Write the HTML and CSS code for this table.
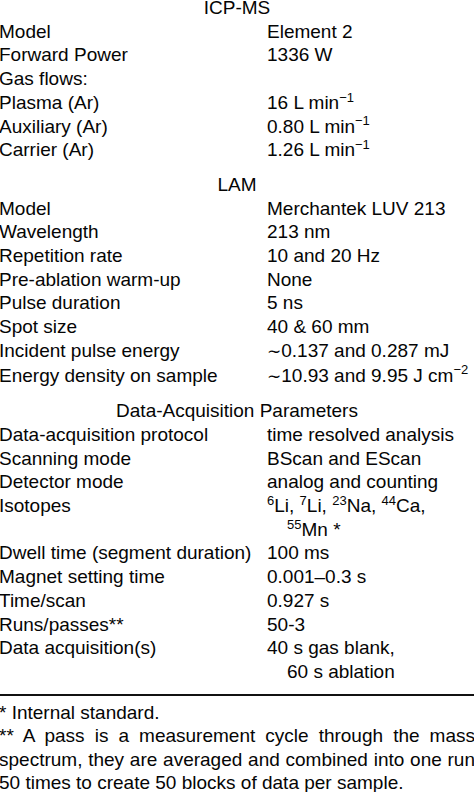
FILE: index.html
```html
<!DOCTYPE html>
<html>
<head>
<meta charset="utf-8">
<link rel="stylesheet" href="styles.css">
</head>
<body>
<div class="sheet">
  <section class="section">
    <div class="heading">ICP-MS</div>
    <div class="row"><div class="label">Model</div><div class="value">Element 2</div></div>
    <div class="row"><div class="label">Forward Power</div><div class="value">1336 W</div></div>
    <div class="row"><div class="label">Gas flows:</div><div class="value"></div></div>
    <div class="row"><div class="label">Plasma (Ar)</div><div class="value">16 L min<sup>−1</sup></div></div>
    <div class="row"><div class="label">Auxiliary (Ar)</div><div class="value">0.80 L min<sup>−1</sup></div></div>
    <div class="row"><div class="label">Carrier (Ar)</div><div class="value">1.26 L min<sup>−1</sup></div></div>
  </section>
  <section class="section">
    <div class="heading">LAM</div>
    <div class="row"><div class="label">Model</div><div class="value">Merchantek LUV 213</div></div>
    <div class="row"><div class="label">Wavelength</div><div class="value">213 nm</div></div>
    <div class="row"><div class="label">Repetition rate</div><div class="value">10 and 20 Hz</div></div>
    <div class="row"><div class="label">Pre-ablation warm-up</div><div class="value">None</div></div>
    <div class="row"><div class="label">Pulse duration</div><div class="value">5 ns</div></div>
    <div class="row"><div class="label">Spot size</div><div class="value">40 &amp; 60 mm</div></div>
    <div class="row"><div class="label">Incident pulse energy</div><div class="value"><span class="tilde">∼</span>0.137 and 0.287 mJ</div></div>
    <div class="row"><div class="label">Energy density on sample</div><div class="value"><span class="tilde">∼</span>10.93 and 9.95 J cm<sup>−2</sup></div></div>
  </section>
  <section class="section">
    <div class="heading">Data-Acquisition Parameters</div>
    <div class="row"><div class="label">Data-acquisition protocol</div><div class="value">time resolved analysis</div></div>
    <div class="row"><div class="label">Scanning mode</div><div class="value">BScan and EScan</div></div>
    <div class="row"><div class="label">Detector mode</div><div class="value">analog and counting</div></div>
    <div class="row"><div class="label">Isotopes</div><div class="value"><div><sup>6</sup>Li, <sup>7</sup>Li, <sup>23</sup>Na, <sup>44</sup>Ca,</div><div class="cont"><sup>55</sup>Mn *</div></div></div>
    <div class="row"><div class="label">Dwell time (segment duration)</div><div class="value">100 ms</div></div>
    <div class="row"><div class="label">Magnet setting time</div><div class="value">0.001–0.3 s</div></div>
    <div class="row"><div class="label">Time/scan</div><div class="value">0.927 s</div></div>
    <div class="row"><div class="label">Runs/passes**</div><div class="value">50-3</div></div>
    <div class="row"><div class="label">Data acquisition(s)</div><div class="value"><div>40 s gas blank,</div><div class="cont">60 s ablation</div></div></div>
  </section>
  <div class="notes">
    <p class="note">* Internal standard.</p>
    <p class="note note-just">** A pass is a measurement cycle through the mass spectrum, they are averaged and combined into one run 50 times to create 50 blocks of data per sample.</p>
  </div>
</div>
</body>
</html>
```
FILE: styles.css
```css
html, body {
  margin: 0;
  padding: 0;
  background: #ffffff;
  overflow: hidden;
}
body {
  width: 474px;
  height: 792px;
  font-family: "Liberation Sans", Arial, sans-serif;
  font-size: 19px;
  color: #050505;
}
.sheet {
  width: 476px;
  margin-left: -1px;
  margin-top: -4px;
}
.section {
  line-height: 23.7px;
}
.section + .section {
  margin-top: 11px;
}
.heading {
  text-align: center;
}
.row {
  display: grid;
  grid-template-columns: 268px 1fr;
}
.label, .value {
  white-space: nowrap;
}
.cont {
  padding-left: 20px;
}
.tilde {
  font-family: "DejaVu Sans", sans-serif;
  font-size: 17px;
}
sup {
  font-size: 13px;
  line-height: 0;
  vertical-align: baseline;
  position: relative;
  top: -0.55em;
}
.notes {
  margin-top: 10px;
  border-top: 2px solid #111;
  padding-top: 5px;
  line-height: 23.4px;
}
.note {
  margin: 0;
}
.note-just {
  text-align: justify;
}
```
